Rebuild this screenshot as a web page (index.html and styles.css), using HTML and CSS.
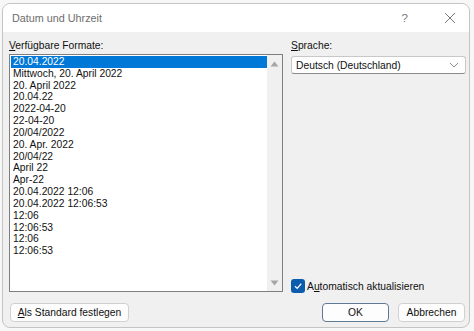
FILE: index.html
```html
<!DOCTYPE html>
<html lang="de">

<head>
    <meta charset="UTF-8">
    <title>Datum und Uhrzeit</title>
    <link rel="stylesheet" href="styles.css">
</head>

<body>

    <div class="dialog">
        <div class="titlebar">
            <span class="title">Datum und Uhrzeit</span>
            <span class="help">?</span>
            <svg class="close" width="12" height="12" viewBox="0 0 12 12">
                <path d="M1 1 L11 11 M11 1 L1 11" stroke="#777" stroke-width="1" fill="none" />
            </svg>
        </div>

        <div class="content">
            <div class="left-col">
                <div class="label"><u>V</u>erfügbare Formate:</div>
                <div class="listbox">
                    <ul class="items">
                        <li class="selected">20.04.2022</li>
                        <li>Mittwoch, 20. April 2022</li>
                        <li>20. April 2022</li>
                        <li>20.04.22</li>
                        <li>2022-04-20</li>
                        <li>22-04-20</li>
                        <li>20/04/2022</li>
                        <li>20. Apr. 2022</li>
                        <li>20/04/22</li>
                        <li>April 22</li>
                        <li>Apr-22</li>
                        <li>20.04.2022 12:06</li>
                        <li>20.04.2022 12:06:53</li>
                        <li>12:06</li>
                        <li>12:06:53</li>
                        <li>12:06</li>
                        <li>12:06:53</li>
                    </ul>
                    <div class="scrollbar">
                        <svg width="9" height="6" viewBox="0 0 9 6"><path d="M0.5 5.5 L4.5 0.5 L8.5 5.5 Z" fill="#a6a6a6" /></svg>
                        <svg width="9" height="6" viewBox="0 0 9 6"><path d="M0.5 0.5 L4.5 5.5 L8.5 0.5 Z" fill="#a6a6a6" /></svg>
                    </div>
                </div>
                <button class="btn btn-wide"><u>A</u>ls Standard festlegen</button>
            </div>

            <div class="right-col">
                <div class="label"><u>S</u>prache:</div>
                <div class="select">
                    <span>Deutsch (Deutschland)</span>
                    <svg width="10" height="6" viewBox="0 0 10 6">
                        <path d="M1 1 L5 5 L9 1" stroke="#8a8a8a" stroke-width="1" fill="none" />
                    </svg>
                </div>
                <div class="spacer"></div>
                <label class="check-row">
                    <span class="checkbox">
                        <svg width="10" height="10" viewBox="0 0 10 10">
                            <path d="M2 5.2 L4.2 7.4 L8.2 2.8" stroke="#fff" stroke-width="1.3" fill="none" />
                        </svg>
                    </span>
                    <span>A<u>u</u>tomatisch aktualisieren</span>
                </label>
                <div class="buttons">
                    <button class="btn btn-ok">OK</button>
                    <button class="btn btn-cancel">Abbrechen</button>
                </div>
            </div>
        </div>
    </div>

</body>

</html>
```

FILE: styles.css
```css
* {
    margin: 0;
    padding: 0;
    box-sizing: border-box;
    font-family: 'Liberation Sans', Arial, sans-serif;
}

body {
    background-color: #f7f7f7;
    padding: 3px 0 0 2px;
}

.dialog {
    width: 468px;
    height: 325px;
    border: 1px solid #c4c4c4;
    border-radius: 8px;
    overflow: hidden;
    display: flex;
    flex-direction: column;
    background: #f0f0f0;
}

.titlebar {
    height: 28px;
    background: white;
    display: flex;
    align-items: center;
    padding-left: 9px;
    flex-shrink: 0;
}

.title {
    font-size: 10.8px;
    color: #6d6d6d;
    flex: 1;
}

.help {
    font-size: 11.5px;
    color: #777;
    margin-right: 36px;
}

.close {
    margin-right: 13px;
}

.content {
    flex: 1;
    display: flex;
    padding: 7px 0 5px 6px;
    font-size: 10.3px;
    color: #111;
}

.left-col {
    width: 274px;
    display: flex;
    flex-direction: column;
}

.right-col {
    width: 175px;
    margin-left: 8px;
    display: flex;
    flex-direction: column;
}

.label {
    height: 15px;
    line-height: 14px;
}

u {
    text-decoration-thickness: 1px;
    text-underline-offset: 1px;
}

.listbox {
    height: 238px;
    border: 1px solid #7e7e7e;
    background: white;
    display: flex;
    padding: 1px 0 1px 1px;
}

.items {
    list-style: none;
    flex: 1;
}

.items li {
    height: 11.83px;
    line-height: 11.83px;
    padding-left: 2px;
    white-space: nowrap;
}

.items .selected {
    background: #0078d7;
    color: white;
}

.scrollbar {
    width: 15px;
    background: #f0f0f0;
    display: flex;
    flex-direction: column;
    justify-content: space-between;
    align-items: center;
    padding: 6px 0 5px 0;
    margin-top: -1px;
    margin-bottom: -1px;
}

.btn {
    height: 19px;
    background: #fdfdfd;
    border: 1px solid #d0d0d0;
    border-radius: 4px;
    font-size: 10.3px;
    color: #111;
}

.btn-wide {
    width: 119px;
    margin-top: 11px;
    margin-left: 1px;
}

.select {
    margin-top: 2px;
    height: 18px;
    background: white;
    border: 1px solid #c8c8c8;
    border-bottom-color: #8a8a8a;
    border-radius: 3px;
    display: flex;
    align-items: center;
    justify-content: space-between;
    padding: 0 6px 0 4px;
}

.spacer {
    flex: 1;
}

.check-row {
    display: flex;
    align-items: center;
    height: 14px;
    gap: 2px;
}

.checkbox {
    width: 14px;
    height: 14px;
    border-radius: 3px;
    background: #0b5cad;
    display: flex;
    align-items: center;
    justify-content: center;
}

.buttons {
    display: flex;
    justify-content: flex-end;
    gap: 9px;
    margin-top: 10px;
    padding-right: 1px;
}

.btn-ok {
    width: 67px;
    border: 1.5px solid #5f7a94;
}

.btn-cancel {
    width: 67px;
}
```
